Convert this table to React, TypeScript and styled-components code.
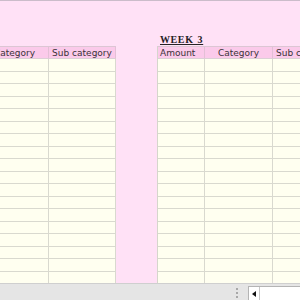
import React from "react";
import styled, { createGlobalStyle } from "styled-components";

const GlobalStyle = createGlobalStyle`
  html, body { margin: 0; padding: 0; background: #e6e6e6; }
  body { overflow: hidden; }
`;

const Frame = styled.div`
  width: 300px;
  height: 300px;
  display: flex;
  flex-direction: column;
  overflow: hidden;
`;

const TopRule = styled.div`
  height: 1px;
  flex: none;
  background: #cbbcca;
`;

const Sheet = styled.div`
  flex: 1;
  min-height: 0;
  background: #ffe1f6;
  display: flex;
  align-items: flex-start;
  gap: 41px;
  padding-top: 33px;
  overflow: hidden;
  box-sizing: border-box;
`;

const WeekBlock = styled.section<{ $shift?: number }>`
  flex: none;
  display: flex;
  flex-direction: column;
  margin-left: ${(p) => p.$shift ?? 0}px;
`;

const WeekTitle = styled.h2`
  margin: 0 0 0 3px;
  height: 12px;
  font: bold 10px/12px "Liberation Serif", serif;
  color: #262226;
  text-decoration: underline;
  text-underline-offset: 1px;
  letter-spacing: 0.6px;
  word-spacing: 1px;
  white-space: nowrap;
`;

const Grid = styled.div`
  display: grid;
  grid-template-columns: 47px 68px 67px;
  grid-auto-rows: 12.5px;
  grid-template-rows: 12px;
  border-top: 1px solid #dcc6d4;
  border-left: 1px solid #d6d6cc;
`;

const HeadCell = styled.div<{ $align?: "left" | "center" }>`
  box-sizing: border-box;
  background: #fbcaea;
  border-right: 1px solid #e3c0d6;
  border-bottom: 1px solid #dccfd6;
  font: 9px/12px "DejaVu Sans", sans-serif;
  color: #3a3238;
  text-align: ${(p) => p.$align ?? "center"};
  padding-left: ${(p) => (p.$align === "left" ? "2px" : "0")};
  white-space: nowrap;
  overflow: hidden;
`;

const Cell = styled.div`
  box-sizing: border-box;
  background: #fffff0;
  border-right: 1px solid #d9d9cf;
  border-bottom: 1px solid #d9d9cf;
`;

const BottomBar = styled.div`
  height: 17px;
  flex: none;
  box-sizing: border-box;
  background: #e5e5e5;
  border-top: 1px solid #cfcfcf;
  display: flex;
  justify-content: flex-end;
  align-items: flex-end;
  gap: 10px;
`;

const Grip = styled.div`
  align-self: center;
  display: flex;
  flex-direction: column;
  gap: 2px;
  margin-top: 1px;
`;

const GripDot = styled.span`
  width: 2px;
  height: 2px;
  background: #a8a8a8;
`;

const ScrollBox = styled.div`
  width: 52px;
  height: 14px;
  box-sizing: border-box;
  background: #ffffff;
  border-top: 1px solid #b4b4b4;
  border-left: 1px solid #b4b4b4;
  display: flex;
`;

const ArrowButton = styled.div`
  width: 10px;
  flex: none;
  border-right: 1px solid #c8c8c8;
  display: flex;
  align-items: center;
  justify-content: center;
`;

const Arrow = styled.span`
  width: 0;
  height: 0;
  border-top: 3px solid transparent;
  border-bottom: 3px solid transparent;
  border-right: 4px solid #111;
`;

const ROWS = 18;
const headers: { label: string; align: "left" | "center" }[] = [
  { label: "Amount", align: "left" },
  { label: "Category", align: "center" },
  { label: "Sub category", align: "center" },
];

function Week({ title, shift }: { title: string; shift?: number }) {
  return (
    <WeekBlock $shift={shift}>
      <WeekTitle>{title}</WeekTitle>
      <Grid>
        {headers.map((h) => (
          <HeadCell key={h.label} $align={h.align}>
            {h.label}
          </HeadCell>
        ))}
        {Array.from({ length: ROWS * 3 }, (_, i) => (
          <Cell key={i} />
        ))}
      </Grid>
    </WeekBlock>
  );
}

export default function App() {
  return (
    <>
      <GlobalStyle />
      <Frame>
        <TopRule />
        <Sheet>
          <Week title="WEEK 2" shift={-67} />
          <Week title="WEEK 3" />
        </Sheet>
        <BottomBar>
          <Grip>
            <GripDot />
            <GripDot />
            <GripDot />
          </Grip>
          <ScrollBox>
            <ArrowButton>
              <Arrow />
            </ArrowButton>
          </ScrollBox>
        </BottomBar>
      </Frame>
    </>
  );
}
